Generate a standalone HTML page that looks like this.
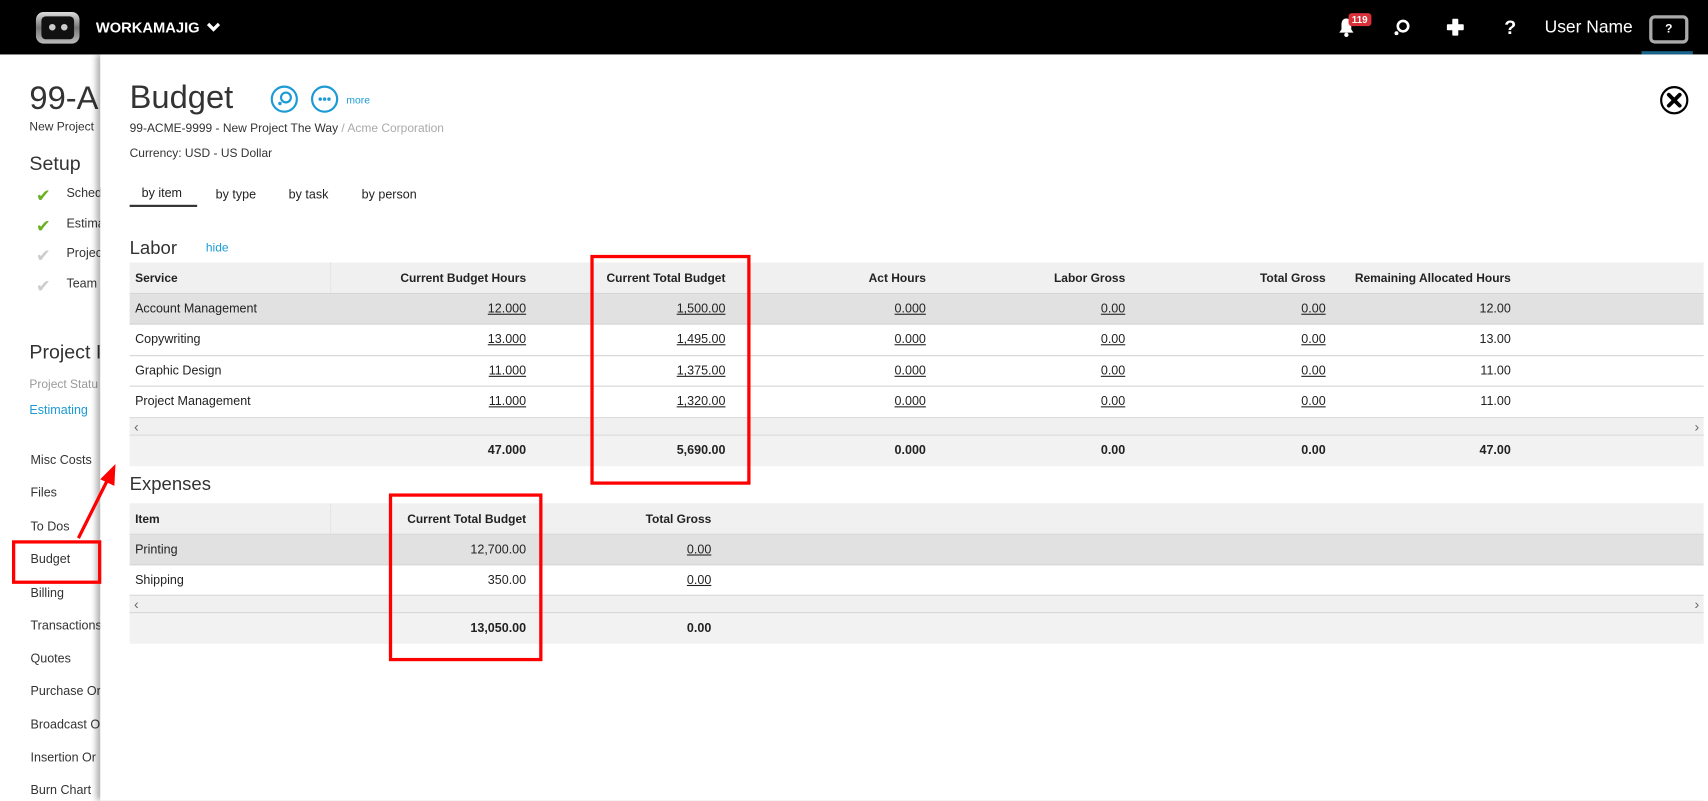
<!DOCTYPE html>
<html><head><meta charset="utf-8"><style>
html,body{margin:0;padding:0;width:1708px;height:801px;overflow:hidden;background:#fff}
#w{position:absolute;left:0;top:0;width:1568px;height:735px;transform:scale(1.08929);transform-origin:0 0;font-family:"Liberation Sans",sans-serif;color:#222}
.a{position:absolute;white-space:nowrap}
.hdr{position:absolute;left:0;top:0;width:1568px;height:50px;background:#000}
.side{font-size:11.5px;color:#333}
.tbl{position:absolute;left:119px;width:1445px}
.row{position:absolute;left:0;width:1445px;font-size:11.5px;border-bottom:1px solid #d4d4d4}
.c{position:absolute;top:0;white-space:nowrap}
.r{text-align:right}
u{text-decoration:underline}
.rb{position:absolute;border:3px solid #f00;box-sizing:border-box}
</style></head><body><div id="w">
<div class="hdr"></div>
<div class="a" style="left:33px;top:11px;width:40px;height:29px;border-radius:7px;background:linear-gradient(#ddd,#777 50%,#bbb);"></div>
<div class="a" style="left:38px;top:15px;width:30px;height:21px;border-radius:4px;background:#111;"></div>
<div class="a" style="left:45px;top:22px;width:6px;height:6px;border-radius:50%;background:#ccc"></div>
<div class="a" style="left:56px;top:22px;width:6px;height:6px;border-radius:50%;background:#ccc"></div>
<div class="a" style="left:88px;top:18px;color:#fff;font-size:13.5px;font-weight:bold">WORKAMAJIG</div>
<svg class="a" style="left:189px;top:20px" width="14" height="10"><path d="M2 2L7 7L12 2" fill="none" stroke="#fff" stroke-width="3"/></svg>
<svg class="a" style="left:1228px;top:16px" width="16" height="18" viewBox="0 0 16 18"><path d="M8 1C4.5 1 3.5 4 3.5 7v4L1.5 14h13l-2-3V7C12.5 4 11.5 1 8 1z" fill="#fff"/><circle cx="8" cy="16" r="2" fill="#fff"/></svg>
<div class="a" style="left:1238px;top:12px;background:#d9303a;color:#fff;font-size:9px;font-weight:bold;padding:1px 3px;border-radius:3px">119</div>
<svg class="a" style="left:1278px;top:17px" width="17" height="17" viewBox="0 0 17 17"><circle cx="10" cy="7" r="4.8" fill="none" stroke="#fff" stroke-width="2.4"/><circle cx="4" cy="13.5" r="1.8" fill="#fff"/></svg>
<svg class="a" style="left:1328px;top:17px" width="16" height="16" viewBox="0 0 16 16"><path d="M6 1h4v5h5v4h-5v5H6v-5H1V6h5z" fill="#fff" stroke="#fff" stroke-linejoin="round" stroke-width="1.5"/></svg>
<div class="a" style="left:1381px;top:15px;color:#fff;font-size:18px;font-weight:bold">?</div>
<div class="a" style="left:1418px;top:17px;color:#fff;font-size:16px">User Name</div>
<div class="a" style="left:1514px;top:14px;width:30px;height:20px;border:3px solid #aaa;border-radius:5px;background:#000;color:#fff;font-size:11px;font-weight:bold;text-align:center;line-height:20px">?</div>
<div class="a" style="left:1507px;top:47px;width:47px;height:3px;background:#1a6e96"></div>

<div class="a" style="left:27px;top:74px;font-size:30px;color:#333">99-A</div>
<div class="a side" style="left:27px;top:111px;font-size:11px">New Project</div>
<div class="a" style="left:27px;top:140px;font-size:18px;color:#333">Setup</div>
<div class="a" style="left:33px;top:170px;color:#6ab023;font-size:16px">&#10004;</div>
<div class="a" style="left:33px;top:198px;color:#6ab023;font-size:16px">&#10004;</div>
<div class="a" style="left:33px;top:225px;color:#ccc;font-size:16px">&#10004;</div>
<div class="a" style="left:33px;top:253px;color:#ccc;font-size:16px">&#10004;</div>
<div class="a side" style="left:61px;top:172px">Sched</div>
<div class="a side" style="left:61px;top:200px">Estima</div>
<div class="a side" style="left:61px;top:227px">Projec</div>
<div class="a side" style="left:61px;top:255px">Team</div>
<div class="a" style="left:27px;top:313px;font-size:18px;color:#333">Project I</div>
<div class="a" style="left:27px;top:347px;font-size:11px;color:#999">Project Statu</div>
<div class="a" style="left:27px;top:371px;font-size:11.5px;color:#1b9ad6">Estimating</div>
<div class="a side" style="left:28px;top:417px">Misc Costs</div>
<div class="a side" style="left:28px;top:447px">Files</div>
<div class="a side" style="left:28px;top:478px">To Dos</div>
<div class="a side" style="left:28px;top:508px">Budget</div>
<div class="a side" style="left:28px;top:539px">Billing</div>
<div class="a side" style="left:28px;top:569px">Transactions</div>
<div class="a side" style="left:28px;top:599px">Quotes</div>
<div class="a side" style="left:28px;top:629px">Purchase Or</div>
<div class="a side" style="left:28px;top:660px">Broadcast O</div>
<div class="a side" style="left:28px;top:690px">Insertion Or</div>
<div class="a side" style="left:28px;top:720px">Burn Chart</div>

<div class="a" style="left:92px;top:50px;width:1476px;height:685px;background:#fff;box-shadow:-4px 0 5px rgba(0,0,0,.3)"></div>
<div class="rb" style="left:11px;top:496px;width:82px;height:40px"></div>
<svg class="a" style="left:60px;top:420px" width="60" height="80"><line x1="12" y1="74" x2="40" y2="18" stroke="#f00" stroke-width="3"/><polygon points="46,6 32,20 45,26" fill="#f00"/></svg>

<div class="a" style="left:119px;top:73px;font-size:30px;color:#333">Budget</div>
<svg class="a" style="left:248px;top:78px" width="95" height="28"><circle cx="13" cy="13" r="11.5" fill="none" stroke="#1b9ad6" stroke-width="2"/><circle cx="14.5" cy="11.5" r="4.5" fill="none" stroke="#1b9ad6" stroke-width="2"/><circle cx="9" cy="17" r="1.6" fill="#1b9ad6"/><circle cx="50" cy="13" r="11.5" fill="none" stroke="#1b9ad6" stroke-width="2"/><circle cx="46" cy="13" r="1.6" fill="#1b9ad6"/><circle cx="50" cy="13" r="1.6" fill="#1b9ad6"/><circle cx="54" cy="13" r="1.6" fill="#1b9ad6"/></svg>
<div class="a" style="left:318px;top:87px;font-size:9.5px;color:#1b9ad6">more</div>
<div class="a" style="left:119px;top:112px;font-size:11px;color:#333">99-ACME-9999 - New Project The Way <span style="color:#aaa">/ Acme Corporation</span></div>
<div class="a" style="left:119px;top:135px;font-size:11px;color:#333">Currency: USD - US Dollar</div>
<div class="a" style="left:130px;top:172px;font-size:11.5px">by item</div>
<div class="a" style="left:119px;top:188px;width:62px;height:2px;background:#333"></div>
<div class="a" style="left:198px;top:173px;font-size:11.5px">by type</div>
<div class="a" style="left:265px;top:173px;font-size:11.5px">by task</div>
<div class="a" style="left:332px;top:173px;font-size:11.5px">by person</div>
<svg class="a" style="left:1523px;top:78px" width="28" height="28"><circle cx="14" cy="14" r="12" fill="none" stroke="#000" stroke-width="2"/><path d="M9 9L19 19M19 9L9 19" stroke="#000" stroke-width="3.5" stroke-linecap="round"/></svg>

<div class="a" style="left:119px;top:218px;font-size:17px;color:#333">Labor</div>
<div class="a" style="left:189px;top:222px;font-size:11px;color:#1b9ad6">hide</div>
<div class="tbl" style="top:241px">
 <div class="row" style="top:0;height:28px;background:#f0f0f0;font-weight:bold;font-size:11px">
  <div class="c" style="left:5px;top:9px">Service</div>
  <div class="c r" style="right:1081px;top:9px">Current Budget Hours</div>
  <div class="c r" style="right:898px;top:9px">Current Total Budget</div>
  <div class="c r" style="right:714px;top:9px">Act Hours</div>
  <div class="c r" style="right:531px;top:9px">Labor Gross</div>
  <div class="c r" style="right:347px;top:9px">Total Gross</div>
  <div class="c r" style="right:177px;top:9px">Remaining Allocated Hours</div>
  <div class="c" style="left:184px;top:0;height:28px;border-left:1px dotted #ddd"></div>
 </div>
 <div class="row" style="top:29px;height:27px;background:#e1e1e1">
  <div class="c" style="left:5px;top:8px">Account Management</div>
  <div class="c r" style="right:1081px;top:8px"><u>12.000</u></div><div class="c r" style="right:898px;top:8px"><u>1,500.00</u></div><div class="c r" style="right:714px;top:8px"><u>0.000</u></div><div class="c r" style="right:531px;top:8px"><u>0.00</u></div><div class="c r" style="right:347px;top:8px"><u>0.00</u></div><div class="c r" style="right:177px;top:8px">12.00</div>
 </div>
 <div class="row" style="top:57px;height:28px">
  <div class="c" style="left:5px;top:8px">Copywriting</div>
  <div class="c r" style="right:1081px;top:8px"><u>13.000</u></div><div class="c r" style="right:898px;top:8px"><u>1,495.00</u></div><div class="c r" style="right:714px;top:8px"><u>0.000</u></div><div class="c r" style="right:531px;top:8px"><u>0.00</u></div><div class="c r" style="right:347px;top:8px"><u>0.00</u></div><div class="c r" style="right:177px;top:8px">13.00</div>
 </div>
 <div class="row" style="top:86px;height:27px">
  <div class="c" style="left:5px;top:8px">Graphic Design</div>
  <div class="c r" style="right:1081px;top:8px"><u>11.000</u></div><div class="c r" style="right:898px;top:8px"><u>1,375.00</u></div><div class="c r" style="right:714px;top:8px"><u>0.000</u></div><div class="c r" style="right:531px;top:8px"><u>0.00</u></div><div class="c r" style="right:347px;top:8px"><u>0.00</u></div><div class="c r" style="right:177px;top:8px">11.00</div>
 </div>
 <div class="row" style="top:114px;height:28px">
  <div class="c" style="left:5px;top:8px">Project Management</div>
  <div class="c r" style="right:1081px;top:8px"><u>11.000</u></div><div class="c r" style="right:898px;top:8px"><u>1,320.00</u></div><div class="c r" style="right:714px;top:8px"><u>0.000</u></div><div class="c r" style="right:531px;top:8px"><u>0.00</u></div><div class="c r" style="right:347px;top:8px"><u>0.00</u></div><div class="c r" style="right:177px;top:8px">11.00</div>
 </div>
 <div class="row" style="top:143px;height:15px;background:#f0f0f0"><div class="c" style="left:4px;top:0;font-size:13px;color:#666">&lsaquo;</div><div class="c" style="right:4px;top:0;font-size:13px;color:#666">&rsaquo;</div></div>
 <div class="row" style="top:159px;height:28px;background:#f2f2f2;border:0;font-weight:bold">
  <div class="c r" style="right:1081px;top:8px">47.000</div><div class="c r" style="right:898px;top:8px">5,690.00</div><div class="c r" style="right:714px;top:8px">0.000</div><div class="c r" style="right:531px;top:8px">0.00</div><div class="c r" style="right:347px;top:8px">0.00</div><div class="c r" style="right:177px;top:8px">47.00</div>
 </div>
</div>
<div class="rb" style="left:542px;top:234px;width:147px;height:211px"></div>

<div class="a" style="left:119px;top:435px;font-size:17px;color:#333">Expenses</div>
<div class="tbl" style="top:462px">
 <div class="row" style="top:0;height:28px;background:#f0f0f0;font-weight:bold;font-size:11px">
  <div class="c" style="left:5px;top:9px">Item</div>
  <div class="c r" style="right:1081px;top:9px">Current Total Budget</div>
  <div class="c r" style="right:911px;top:9px">Total Gross</div>
  <div class="c" style="left:184px;top:0;height:28px;border-left:1px dotted #ddd"></div>
 </div>
 <div class="row" style="top:29px;height:27px;background:#e1e1e1">
  <div class="c" style="left:5px;top:8px">Printing</div><div class="c r" style="right:1081px;top:8px">12,700.00</div><div class="c r" style="right:911px;top:8px"><u>0.00</u></div>
 </div>
 <div class="row" style="top:57px;height:27px">
  <div class="c" style="left:5px;top:8px">Shipping</div><div class="c r" style="right:1081px;top:8px">350.00</div><div class="c r" style="right:911px;top:8px"><u>0.00</u></div>
 </div>
 <div class="row" style="top:85px;height:15px;background:#f0f0f0"><div class="c" style="left:4px;top:0;font-size:13px;color:#666">&lsaquo;</div><div class="c" style="right:4px;top:0;font-size:13px;color:#666">&rsaquo;</div></div>
 <div class="row" style="top:101px;height:28px;background:#f2f2f2;border:0;font-weight:bold">
  <div class="c r" style="right:1081px;top:8px">13,050.00</div><div class="c r" style="right:911px;top:8px">0.00</div>
 </div>
</div>
<div class="rb" style="left:357px;top:453px;width:141px;height:154px"></div>
</div></body></html>
